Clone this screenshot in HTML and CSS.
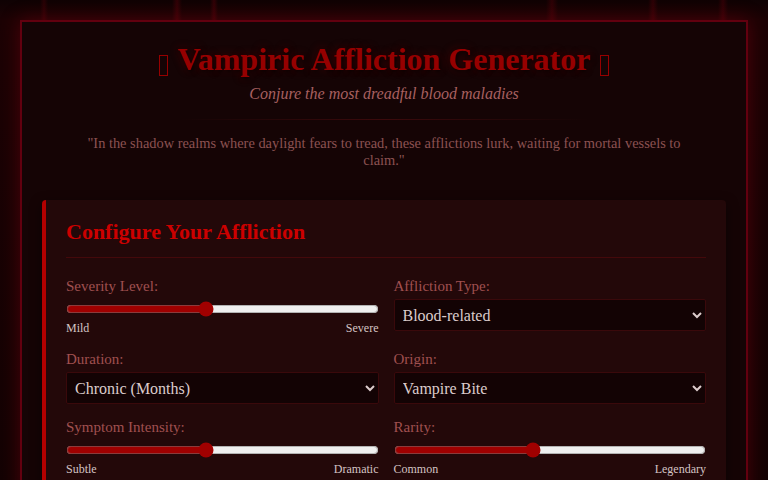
FILE: index.html
```html
<!DOCTYPE html>
<html lang="en">

<head>
    <meta charset="UTF-8">
    <meta name="viewport" content="width=device-width, initial-scale=1.0">
    <title>Vampiric Affliction Generator</title>
    <link rel="stylesheet" href="styles.css">
</head>

<body>
    <div class="crypt">
        <header class="masthead">
            <h1 class="title"><span class="glyph"></span> Vampiric Affliction Generator <span class="glyph"></span></h1>
            <p class="subtitle">Conjure the most dreadful blood maladies</p>
            <div class="divider"></div>
            <p class="lore">"In the shadow realms where daylight fears to tread, these afflictions lurk, waiting for mortal vessels to claim."</p>
        </header>

        <section class="panel">
            <h2 class="panel-title">Configure Your Affliction</h2>
            <div class="form-grid">
                <div class="field">
                    <label for="severity">Severity Level:</label>
                    <input type="range" id="severity" min="1" max="10" value="5">
                    <div class="scale"><span>Mild</span><span>Severe</span></div>
                </div>
                <div class="field">
                    <label for="type">Affliction Type:</label>
                    <select id="type">
                        <option>Blood-related</option>
                        <option>Cursed</option>
                        <option>Spectral</option>
                    </select>
                </div>
                <div class="field">
                    <label for="duration">Duration:</label>
                    <select id="duration">
                        <option>Chronic (Months)</option>
                        <option>Acute (Days)</option>
                        <option>Eternal</option>
                    </select>
                </div>
                <div class="field">
                    <label for="origin">Origin:</label>
                    <select id="origin">
                        <option>Vampire Bite</option>
                        <option>Ancient Curse</option>
                        <option>Tainted Blood</option>
                    </select>
                </div>
                <div class="field">
                    <label for="intensity">Symptom Intensity:</label>
                    <input type="range" id="intensity" min="1" max="10" value="5">
                    <div class="scale"><span>Subtle</span><span>Dramatic</span></div>
                </div>
                <div class="field">
                    <label for="rarity">Rarity:</label>
                    <input type="range" id="rarity" min="1" max="10" value="5">
                    <div class="scale"><span>Common</span><span>Legendary</span></div>
                </div>
            </div>
        </section>
    </div>
</body>

</html>
```

FILE: styles.css
```css
body {
    margin: 0;
    padding: 20px;
    font-family: 'Liberation Serif', 'Times New Roman', serif;
    color: #d8c8c8;
    background-color: #0c0203;
    /* faint blood streaks behind the crypt */
    background-image:
        linear-gradient(90deg,
            transparent 40px, rgba(110, 0, 12, 0.25) 44px, transparent 48px,
            transparent 172px, rgba(110, 0, 12, 0.35) 177px, transparent 182px,
            transparent 210px, rgba(110, 0, 12, 0.35) 214px, transparent 218px,
            transparent 546px, rgba(110, 0, 12, 0.3) 552px, transparent 558px,
            transparent 648px, rgba(110, 0, 12, 0.3) 653px, transparent 658px,
            transparent 718px, rgba(110, 0, 12, 0.3) 723px, transparent 728px),
        linear-gradient(180deg, #0f0203 0%, #1c0204 20px, #120203 100%);
}

.crypt {
    background: #150405;
    border: 2px solid #62000f;
    box-shadow: 0 0 18px rgba(140, 0, 15, 0.45);
    padding: 19px 20px 20px;
}

.masthead {
    text-align: center;
}

.title {
    margin: 0;
    font-size: 32px;
    font-weight: bold;
    color: #960000;
    text-shadow: 2px 2px 4px rgba(0, 0, 0, 0.8), 0 0 10px rgba(160, 0, 0, 0.35);
}

/* missing-glyph boxes either side of the title */
.glyph {
    display: inline-block;
    width: 7px;
    height: 19px;
    border: 1px solid #960000;
    vertical-align: -6px;
    margin: 0 2px;
}

.subtitle {
    margin: 7px 0 0;
    font-size: 16px;
    font-style: italic;
    color: #a86060;
}

.divider {
    height: 1px;
    margin: 16px auto 0;
    width: 60%;
    background: linear-gradient(90deg, transparent, #3c0a0c, transparent);
}

.lore {
    margin: 15px auto 0;
    max-width: 600px;
    font-size: 14.4px;
    line-height: 17px;
    color: #8c5252;
}

.panel {
    margin-top: 31px;
    background: #230809;
    border-left: 4px solid #b30000;
    border-radius: 4px;
    box-shadow: 0 4px 12px rgba(0, 0, 0, 0.5);
    padding: 19px 20px 20px;
}

.panel-title {
    margin: 0 0 20px;
    padding-bottom: 12px;
    border-bottom: 1px solid #44090b;
    font-size: 22px;
    font-weight: bold;
    color: #cc0000;
}

.form-grid {
    display: grid;
    grid-template-columns: 1fr 1fr;
    column-gap: 15px;
    row-gap: 15px;
}

.field {
    display: flex;
    flex-direction: column;
}

.field label {
    font-size: 15px;
    color: #a05050;
    margin-bottom: 4px;
}

.field input[type="range"] {
    width: 100%;
    margin: 2px 0;
    accent-color: #a00000;
}

.field select {
    font-family: inherit;
    font-size: 16px;
    color: #dccccc;
    background: #130304;
    border: 1px solid #3a090b;
    border-radius: 2px;
    padding: 5px 4px;
    height: 32px;
}

.scale {
    display: flex;
    justify-content: space-between;
    margin-top: 2px;
    font-size: 12px;
    color: #d4c4c4;
}
```
